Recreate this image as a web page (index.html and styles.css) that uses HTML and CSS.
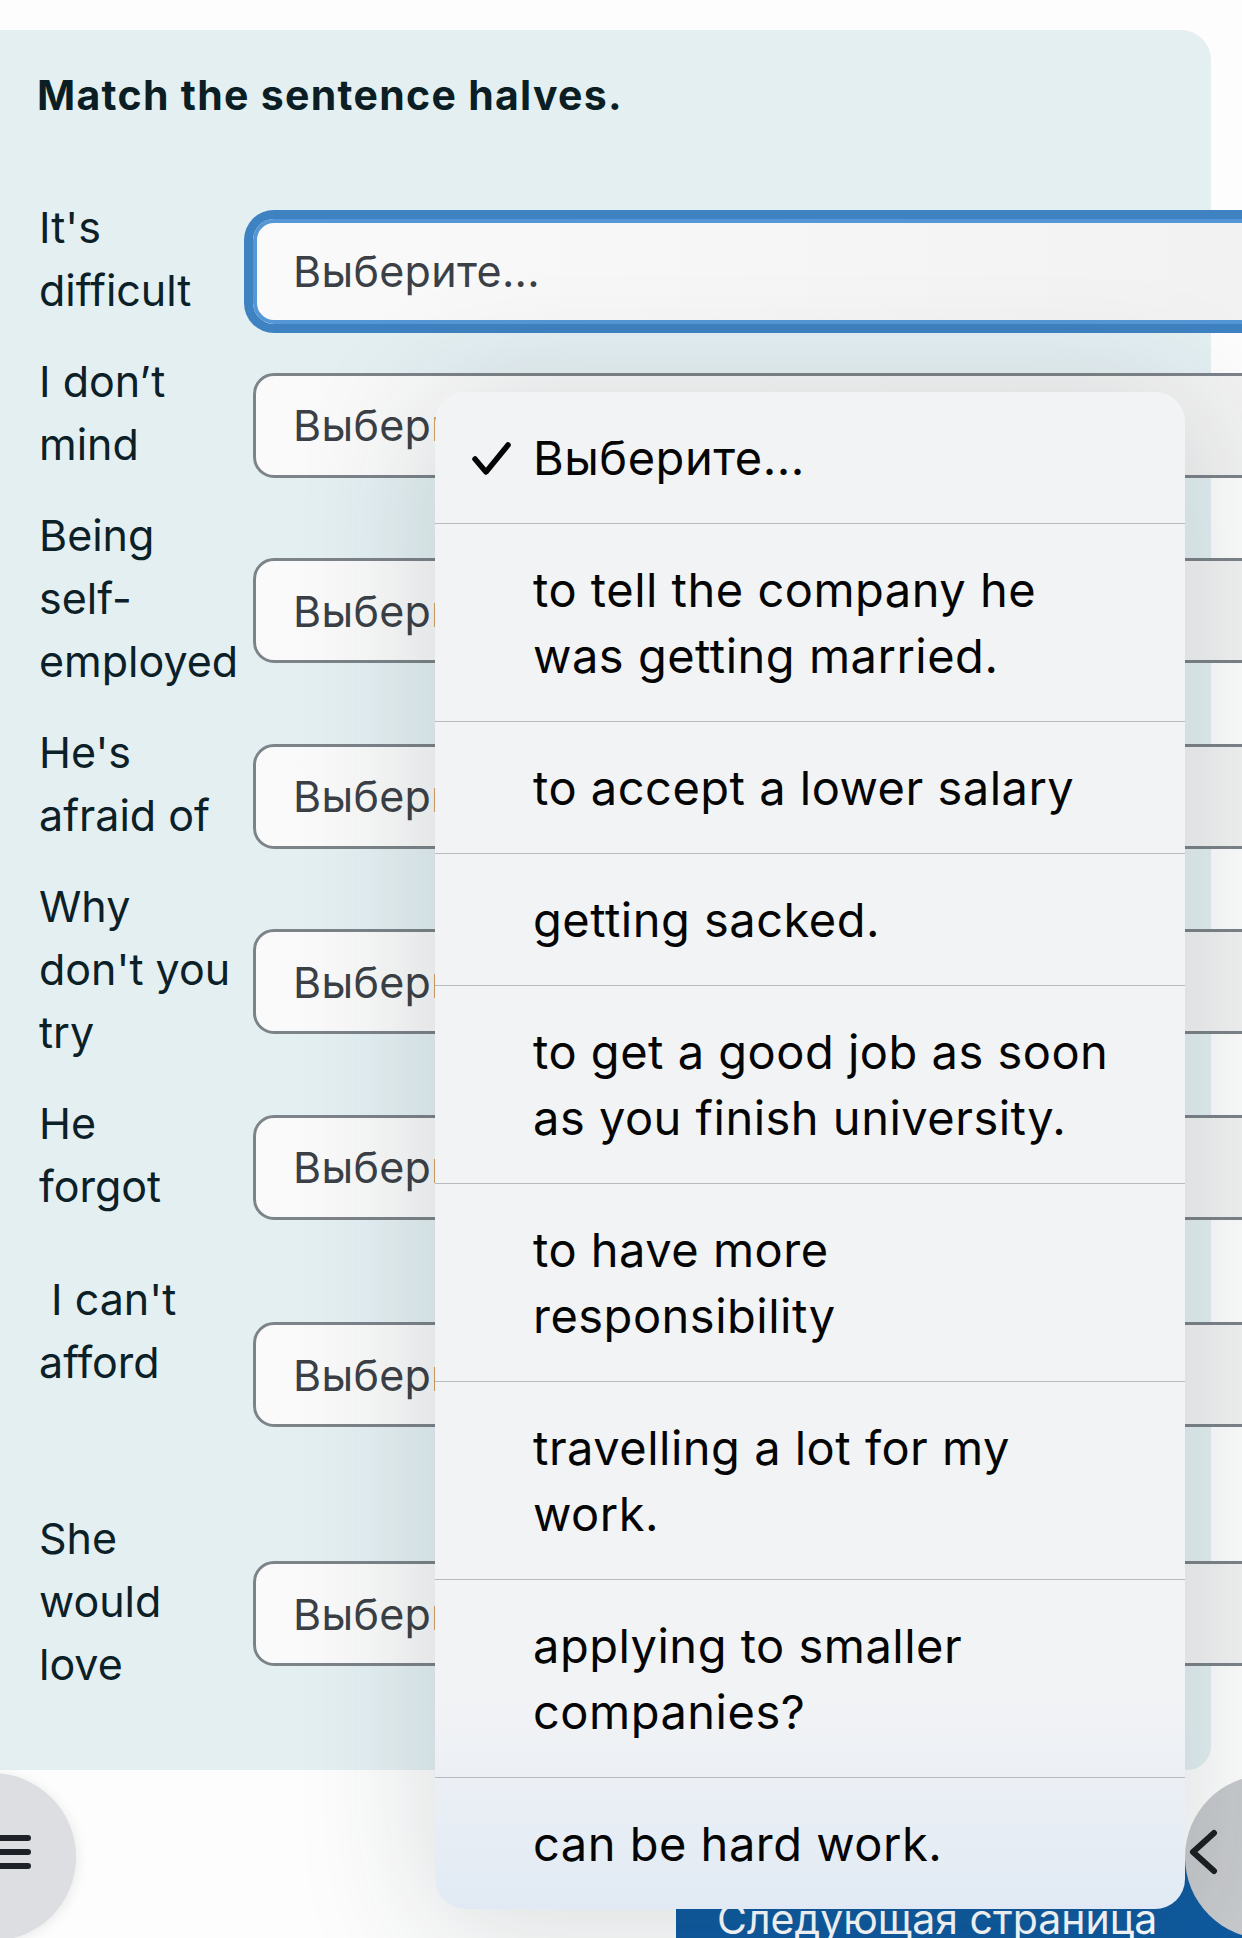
FILE: index.html
```html
<!DOCTYPE html>
<html>
  <head>
    <title>Match the sentence halves</title>
    <link rel="stylesheet" href="styles.css">
  </head>
  <body>
    <div class="page">
      <form class="card" id="matchForm">
        <h2 class="prompt">Match the sentence halves.</h2>

        <div class="row">
          <p class="stem">It's<br>difficult</p>
          <div class="select focused">Выберите...</div>
        </div>
        <div class="row">
          <p class="stem">I don’t<br>mind</p>
          <div class="select">Выберите...</div>
        </div>
        <div class="row">
          <p class="stem">Being<br>self-<br>employed</p>
          <div class="select">Выберите...</div>
        </div>
        <div class="row">
          <p class="stem">He's<br>afraid of</p>
          <div class="select">Выберите...</div>
        </div>
        <div class="row">
          <p class="stem">Why<br>don't you<br>try</p>
          <div class="select">Выберите...</div>
        </div>
        <div class="row">
          <p class="stem">He<br>forgot</p>
          <div class="select">Выберите...</div>
        </div>
        <div class="row spaced">
          <p class="stem">&nbsp;I can't<br>afford<br>&nbsp;</p>
          <div class="select">Выберите...</div>
        </div>
        <div class="row spaced">
          <p class="stem">She<br>would<br>love</p>
          <div class="select">Выберите...</div>
        </div>
      </form>

      <div class="footer">
        <div class="fab fab-left">
          <svg width="40" height="38" viewBox="0 0 40 38">
            <rect x="0" y="3" width="40" height="6" rx="3" fill="#1e2228" />
            <rect x="0" y="17" width="40" height="6" rx="3" fill="#1e2228" />
            <rect x="0" y="31" width="40" height="6" rx="3" fill="#1e2228" />
          </svg>
        </div>
        <button type="button" class="next">Следующая страница</button>
        <div class="fab fab-right">
          <svg width="30" height="46" viewBox="0 0 30 46">
            <polyline points="26,4 5,23 26,42" fill="none" stroke="#1c1e21" stroke-width="6" stroke-linecap="round" stroke-linejoin="round" />
          </svg>
        </div>
      </div>
    </div>

    <!-- native picker opened for the first select -->
    <ul class="picker">
      <li class="chosen">
        <svg class="check" width="40" height="34" viewBox="0 0 40 34">
          <polyline points="4,18 15,31 37,4" fill="none" stroke="#050505" stroke-width="5.5" stroke-linecap="round" stroke-linejoin="round" />
        </svg>
        Выберите...
      </li>
      <li>to tell the company he<br>was getting married.</li>
      <li>to accept a lower salary</li>
      <li>getting sacked.</li>
      <li>to get a good job as soon<br>as you finish university.</li>
      <li>to have more<br>responsibility</li>
      <li>travelling a lot for my<br>work.</li>
      <li>applying to smaller<br>companies?</li>
      <li>can be hard work.</li>
    </ul>
  </body>
</html>
```

FILE: styles.css
```css
body {
  margin: 0;
  width: 1242px;
  height: 1938px;
  overflow: hidden;
  position: relative;
  background: #fdfdfd;
  font-family: Inter, "Noto Sans", sans-serif;
}
.page {
  padding-top: 30px;
}
.card {
  width: 1211px;
  box-sizing: border-box;
  padding: 41px 0 50px 37px;
  background: #e4eff2;
  border-radius: 0 30px 24px 0;
}
.prompt {
  margin: 0 0 77px 0;
  font-size: 41px;
  line-height: 48px;
  font-weight: 700;
  letter-spacing: 1.3px;
  color: #0b1e24;
}
.row {
  display: flex;
  align-items: center;
  margin-top: 4px;
}
.row.spaced {
  margin-top: 26px;
}
.stem {
  flex-shrink: 0;
  width: 214px;
  margin: 0;
  padding: 0 0 24px 2px;
  font-size: 43px;
  line-height: 63px;
  color: #0c2027;
  white-space: nowrap;
}
.select {
  flex-shrink: 0;
  display: flex;
  align-items: center;
  width: 1100px;
  height: 105px;
  box-sizing: border-box;
  padding-left: 37px;
  border: 3px solid #7c8389;
  border-radius: 21px;
  background: linear-gradient(90deg, #fafafa, #f1f1f1);
  font-size: 43px;
  letter-spacing: 0.3px;
  color: #3a4046;
}
.select.focused {
  border: 4px solid #5597d6;
  box-shadow: 0 0 0 9px #3f82c1;
  padding-left: 36px;
}
.footer {
  position: relative;
  height: 168px;
}
.fab {
  position: absolute;
  border-radius: 50%;
  display: flex;
  align-items: center;
}
.fab-left {
  left: -92px;
  top: 3px;
  width: 168px;
  height: 168px;
  background: #dcdee2;
  box-shadow: 2px 2px 12px rgba(0, 0, 0, 0.08);
  justify-content: flex-end;
  box-sizing: border-box;
  padding: 0 45px 12px 0;
}
.fab-right {
  left: 1185px;
  top: 5px;
  width: 164px;
  height: 164px;
  background: #c8cacd;
  box-sizing: border-box;
  padding: 0 0 10px 3px;
  z-index: 2;
}
.next {
  position: absolute;
  left: 676px;
  top: 90px;
  width: 640px;
  height: 110px;
  box-sizing: border-box;
  padding: 8px 0 0 41px;
  border: none;
  border-radius: 12px;
  background: #0e5a9f;
  color: #ffffff;
  font-family: Inter, "Noto Sans", sans-serif;
  font-size: 41px;
  line-height: 50px;
  text-align: left;
  display: block;
}
.picker {
  position: absolute;
  left: 435px;
  top: 392px;
  width: 750px;
  margin: 0;
  padding: 0;
  list-style: none;
  border-radius: 30px;
  overflow: hidden;
  background: linear-gradient(180deg, #f2f3f5 0%, #f2f3f5 86%, #e1eaf4 100%);
  box-shadow: 0 16px 130px 10px rgba(30, 45, 55, 0.15);
  z-index: 5;
}
.picker li {
  position: relative;
  padding: 32.5px 40px 32.5px 98px;
  font-size: 47px;
  line-height: 66px;
  letter-spacing: 0.5px;
  color: #050505;
  white-space: nowrap;
}
.picker li + li {
  border-top: 1px solid #b7bac0;
}
.check {
  position: absolute;
  left: 36px;
  top: 49px;
}
```
